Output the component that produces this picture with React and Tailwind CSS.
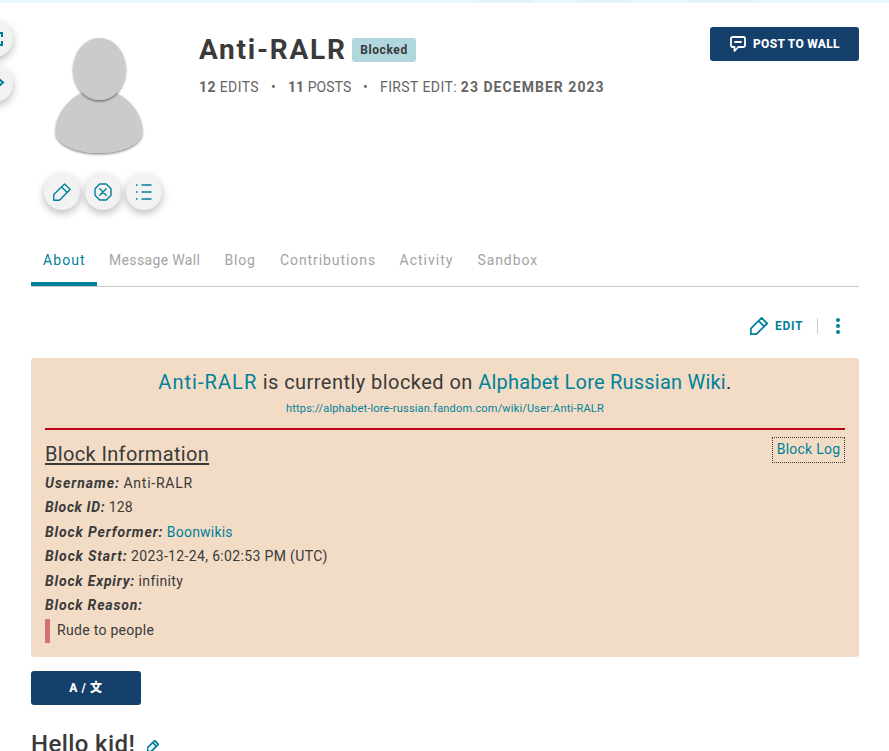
const tabs = [
  { label: 'Message Wall', className: 'w-[115.5px] tracking-[0.350px]' },
  { label: 'Blog', className: 'w-[55.5px] tracking-[0.800px]' },
  { label: 'Contributions', className: 'w-[119.5px] tracking-[0.920px]' },
  { label: 'Activity', className: 'w-[78px] tracking-[1px]' },
  { label: 'Sandbox', className: 'w-[84px] tracking-[0.900px]' },
];

const blockInfo = [
  { label: 'Username:', value: 'Anti-RALR', className: 'tracking-[0.750px]', labelClass: 'tracking-[0.980px]' },
  { label: 'Block ID:', value: '128', className: 'tracking-[0.100px]', labelClass: 'tracking-[0.650px]' },
  { label: 'Block Performer:', value: 'Boonwikis', className: 'tracking-[0.200px] text-[#00819a]', labelClass: 'tracking-[0.880px]' },
  { label: 'Block Start:', value: '2023-12-24, 6:02:53 PM (UTC)', className: 'tracking-[0.350px]', labelClass: 'tracking-[0.900px]' },
  { label: 'Block Expiry:', value: 'infinity', className: 'tracking-[0.350px]', labelClass: 'tracking-[0.830px]' },
  { label: 'Block Reason:', value: '', className: '', labelClass: 'tracking-[0.820px]' },
];

function PencilIcon({ className, strokeWidth = 1.4 }) {
  return (
    <svg viewBox="0 0 18 18" className={className} fill="none" stroke="currentColor" strokeWidth={strokeWidth} strokeLinejoin="round" strokeLinecap="round">
      <path d="M.8 17.2v-5.600L11.600.9l5.500 5.600L6.400 17.200zM8.600 3.900l5.500 5.500" />
    </svg>
  );
}

function RoundButton({ children }) {
  return (
    <button className="flex size-9 items-center justify-center rounded-full bg-[#f2f2f2] text-[#00819a] shadow-[0_3px_8px_rgba(0,0,0,0.28)]">
      {children}
    </button>
  );
}

function Avatar() {
  return (
    <svg viewBox="0 0 92 120" className="h-[120px] w-[92px]">
      <defs>
        <filter id="shade" x="-10%" y="-10%" width="120%" height="125%">
          <feDropShadow dx="0" dy="1.4" stdDeviation="0.8" floodColor="#000" floodOpacity="0.5" />
        </filter>
      </defs>
      <path filter="url(#shade)" fill="#cbcbcb" d="M46 52c23 0 43.500 21 43.500 42.500C89.500 107 70 115.800 46 115.800S2.500 107 2.500 94.500C2.500 73 23 52 46 52z" />
      <ellipse filter="url(#shade)" cx="46.500" cy="32" rx="26.300" ry="31" fill="#cbcbcb" />
    </svg>
  );
}

function SideTools() {
  return (
    <div className="absolute top-[21px] -left-[23px] flex flex-col gap-[9px]">
      <RoundButton>
        <svg viewBox="0 0 36 36" className="size-9" fill="none" stroke="currentColor" strokeWidth="2">
          <path d="M22 12h3v4M25 20v4h-3" />
        </svg>
      </RoundButton>
      <RoundButton>
        <svg viewBox="0 0 36 36" className="size-9" fill="none" stroke="currentColor" strokeWidth="2">
          <path d="M21 12l5 4.500-5 4.500" />
        </svg>
      </RoundButton>
    </div>
  );
}

function Header() {
  return (
    <header className="flex h-[214px]">
      <div className="w-[168px] shrink-0 pt-[34px] pl-[22px]">
        <Avatar />
        <div className="-ml-[9px] mt-[17px] flex gap-[5px]">
          <RoundButton>
            <PencilIcon className="size-[18px]" />
          </RoundButton>
          <RoundButton>
            <svg viewBox="0 0 18 18" className="size-[18px]" fill="none" stroke="currentColor" strokeWidth="1.400" strokeLinecap="round" strokeLinejoin="round">
              <path d="M5.700 1h6.600L17 5.700v6.600L12.300 17H5.700L1 12.300V5.700zM5.800 5.800l6.400 6.400M12.200 5.800l-6.400 6.400" />
            </svg>
          </RoundButton>
          <RoundButton>
            <svg viewBox="0 0 18 18" className="size-[18px]" fill="none" stroke="currentColor" strokeWidth="1.400">
              <path d="M6.500 2h10M6.500 9h10M6.500 16h10M1 2h1.500M1 9h1.500M1 16h1.500" />
            </svg>
          </RoundButton>
        </div>
      </div>
      <div className="flex-1 pt-[27px]">
        <div className="flex h-[38px] items-center whitespace-nowrap">
          <h1 className="w-[153px] pt-px text-[28px] font-bold tracking-[1.750px]">Anti-RALR</h1>
          <span className="mt-[10px] mb-[9px] flex h-6 w-16 items-center justify-center rounded-[3px] bg-[#b0d7de] text-[12px] font-bold tracking-[0.600px]">
            Blocked
          </span>
        </div>
        <div className="mt-[7px] flex h-6 items-center text-[14px] whitespace-nowrap text-[#656565] tracking-[0.400px]">
          <span className="w-[72px]"><b>12</b> EDITS</span>
          <span className="w-[17px]">•</span>
          <span className="w-[75px] tracking-[0.050px]"><b>11</b> POSTS</span>
          <span className="w-[17px]">•</span>
          <span>FIRST EDIT: <b className="tracking-[1.040px]">23 DECEMBER 2023</b></span>
        </div>
      </div>
      <button className="mt-[24px] flex h-[34px] w-[149px] items-center rounded-[3px] bg-[#14406b] pl-5 text-[12px] font-extrabold tracking-[0.300px] whitespace-nowrap text-white">
        <svg viewBox="0 0 16 16" className="mr-[7px] size-4" fill="none" stroke="currentColor" strokeWidth="1.800" strokeLinejoin="round" strokeLinecap="round">
          <path d="M2.500 1h11a1.500 1.500 0 0 1 1.500 1.500v7a1.500 1.500 0 0 1-1.500 1.500H8.300L4.500 15v-4h-2A1.500 1.500 0 0 1 1 9.500v-7A1.500 1.500 0 0 1 2.500 1zM5 6h6" />
        </svg>
        POST TO WALL
      </button>
    </header>
  );
}

function Tabs() {
  return (
    <nav className="mt-[17px] flex h-[53px] border-b border-[#ccc] text-[14px] whitespace-nowrap text-[#a3a3a3]">
      <span className="mr-3 h-[52px] w-[66px] border-b-4 border-[#00819a] pt-4 pl-3 leading-5 tracking-[1.100px] text-[#00819a]">
        About
      </span>
      {tabs.map((tab) => (
        <span key={tab.label} className={`pt-4 leading-5 ${tab.className}`}>
          {tab.label}
        </span>
      ))}
    </nav>
  );
}

function BlockNotice() {
  return (
    <section className="h-[299px] rounded-[3px] bg-[#f2dcc6] px-[14px]">
      <div className="flex h-[72px] flex-col items-center border-b-2 border-[#bf0017] pt-[10px] whitespace-nowrap">
        <p className="text-[20px] leading-7 tracking-[0.450px]">
          <a className="tracking-[1.050px] text-[#00819a]">Anti-RALR</a> is currently blocked on <a className="tracking-[0.220px] text-[#00819a]">Alphabet Lore Russian Wiki</a>.
        </p>
        <a className="mt-[5px] text-[11px] leading-4 tracking-[0.190px] text-[#00819a]">
          https://alphabet-lore-russian.fandom.com/wiki/User:Anti-RALR
        </a>
      </div>
      <div className="flex items-start justify-between pt-[7px]">
        <h2 className="mt-[3px] h-[31px] text-[20px] leading-7 tracking-[0.350px] underline decoration-2 underline-offset-2">Block Information</h2>
        <a className="flex h-[26px] w-[73px] items-center justify-center border border-dotted border-[#3a3a3a] pb-[2px] text-[14px] tracking-[0.250px] whitespace-nowrap text-[#00819a]">
          Block Log
        </a>
      </div>
      <dl>
        {blockInfo.map((row) => (
          <div key={row.label} className="flex h-[24.500px] items-center gap-[3.500px] text-[14px]">
            <dt className={`font-bold italic ${row.labelClass}`}>{row.label}</dt>
            <dd className={row.className}>{row.value}</dd>
          </div>
        ))}
      </dl>
      <blockquote className="mt-[1px] flex h-6 items-center border-l-[5px] border-[#d77070] pb-[2px] pl-[7px] text-[14px] tracking-[0.300px]">
        Rude to people
      </blockquote>
    </section>
  );
}

export default function App() {
  return (
    <div className="relative h-[751px] w-[889px] overflow-hidden bg-white font-[Roboto,'Noto_Sans_CJK_JP',sans-serif] text-[#3a3a3a]">
      <div className="flex h-[3px] bg-[#e6f7ff] pl-[478px]">
        <span className="h-[2px] w-[54px] bg-[#e0f2f8]" />
        <span className="ml-[47px] h-[2px] w-[48px] bg-[#e0f2f8]" />
        <span className="ml-[62px] h-[2px] w-[65px] bg-[#e0f2f8]" />
      </div>
      <SideTools />
      <main className="mr-[30px] ml-[31px]">
        <Header />
        <Tabs />
        <div className="flex h-[71px] items-center justify-end pt-[7px] text-[#00819a]">
          <PencilIcon className="size-[18px]" strokeWidth={1.8} />
          <span className="ml-[7px] w-[42px] text-[12px] font-bold tracking-[0.700px]">EDIT</span>
          <span className="mr-[12px] h-4 w-px bg-[#ccc]" />
          <svg viewBox="0 0 16 16" className="mr-[13px] size-4" fill="currentColor">
            <circle cx="8" cy="2" r="2" />
            <circle cx="8" cy="8" r="2" />
            <circle cx="8" cy="14" r="2" />
          </svg>
        </div>
        <BlockNotice />
        <button className="mt-[14px] flex h-[34px] w-[110px] items-center justify-center rounded-[3px] bg-[#14406b] text-[12px] font-extrabold tracking-[0.600px] text-white">
          A / 文
        </button>
        <h2 className="mt-[23px] flex h-8 items-center text-[24px] font-medium whitespace-nowrap">
          <span className="w-[116px] tracking-[0.400px]">Hello kid!</span>
          <PencilIcon className="mt-[4px] size-3 text-[#00819a]" strokeWidth={2.6} />
        </h2>
      </main>
    </div>
  );
}
